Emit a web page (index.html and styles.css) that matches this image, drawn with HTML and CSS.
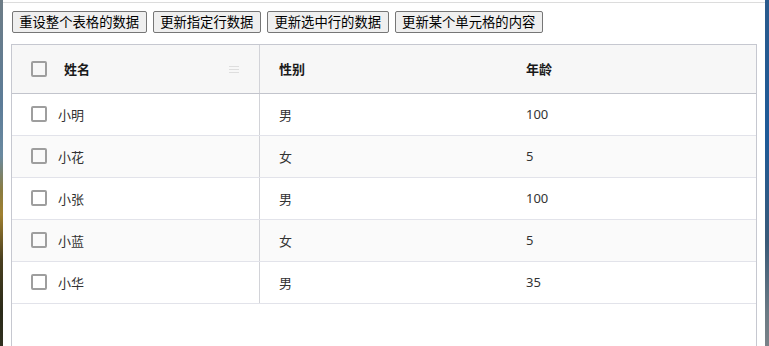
FILE: index.html
```html
<!DOCTYPE html>
<html lang="zh-CN">
<head>
<meta charset="utf-8">
<title>表格</title>
<link rel="stylesheet" href="styles.css">
</head>
<body>
<div class="desk desk-left"></div>
<div class="window">
  <div class="topline"></div>
  <div class="toolbar">
    <button class="btn">重设整个表格的数据</button>
    <button class="btn">更新指定行数据</button>
    <button class="btn">更新选中行的数据</button>
    <button class="btn">更新某个单元格的内容</button>
  </div>
  <div class="grid">
    <div class="row head">
      <div class="cell c1"><span class="cb"></span><span class="htext">姓名</span><span class="handle"><i></i><i></i><i></i></span></div>
      <div class="cell c2">性别</div>
      <div class="cell c3">年龄</div>
    </div>
    <div class="row"><div class="cell c1"><span class="cb"></span><span>小明</span></div><div class="cell c2">男</div><div class="cell c3">100</div></div>
    <div class="row alt"><div class="cell c1"><span class="cb"></span><span>小花</span></div><div class="cell c2">女</div><div class="cell c3">5</div></div>
    <div class="row"><div class="cell c1"><span class="cb"></span><span>小张</span></div><div class="cell c2">男</div><div class="cell c3">100</div></div>
    <div class="row alt"><div class="cell c1"><span class="cb"></span><span>小蓝</span></div><div class="cell c2">女</div><div class="cell c3">5</div></div>
    <div class="row"><div class="cell c1"><span class="cb"></span><span>小华</span></div><div class="cell c2">男</div><div class="cell c3">35</div></div>
  </div>
</div>
<div class="desk desk-right"></div>
</body>
</html>
```
FILE: styles.css
```css
html, body {
  margin: 0;
  height: 346px;
  overflow: hidden;
}
body {
  display: flex;
  background: #fff;
  font-family: "Noto Sans", "Noto Sans CJK SC", sans-serif;
}
.desk {
  flex: none;
  height: 346px;
}
.desk-left {
  width: 3px;
  background: linear-gradient(#6d7c86 0%, #5c7c98 30%, #6a8aa0 45%, #8a7c40 55%, #a08030 62%, #4a4020 75%, #2a2a18 90%, #303020 100%);
}
.desk-right {
  width: 4px;
  background: linear-gradient(#2a5a8c 0%, #1e5a98 40%, #3a5a78 70%, #6a7a84 90%, #7a8288 100%);
}
.window {
  flex: 1;
  min-width: 0;
  background: #fff;
  display: flex;
  flex-direction: column;
}
.topline {
  margin-top: 2px;
  height: 1px;
  background: #dcdcdc;
}
.toolbar {
  display: flex;
  gap: 6px;
  padding: 8px 0 0 8.7px;
  height: 22px;
}
.btn {
  height: 22px;
  padding: 0 6.5px;
  font-family: "Noto Sans CJK SC", sans-serif;
  font-size: 13.33px;
  line-height: 20px;
  color: #000;
  background: #efefef;
  border: 1px solid #767676;
  border-radius: 2px;
}
.grid {
  margin: 11px 0 0 8px;
  width: 744px;
  height: 320px;
  border: 1px solid #c6c8d0;
  border-bottom: none;
  font-size: 13px;
  color: #333;
}
.row {
  display: flex;
  height: 41px;
  border-bottom: 1px solid #e2e3ea;
  background: #fff;
}
.row.alt {
  background: #fafafa;
}
.row.head {
  height: 48px;
  background: #f7f7f7;
  border-bottom: 1px solid #c2c4cc;
  color: #1a1a1a;
  font-weight: bold;
}
.cell {
  display: flex;
  align-items: center;
  box-sizing: border-box;
}
.c1 {
  width: 248px;
  padding-left: 19px;
  border-right: 1px solid #d2d3d8;
  position: relative;
}
.c2 {
  width: 247px;
  padding-left: 19px;
}
.c3 {
  flex: 1;
  padding-left: 19px;
}
.cb {
  width: 12px;
  height: 12px;
  border: 2px solid #9e9e9e;
  border-radius: 2px;
  margin-right: 11px;
  flex: none;
}
.head .cb {
  margin-right: 17px;
}
.handle {
  position: absolute;
  left: 217px;
  top: 21px;
  width: 10px;
  display: flex;
  flex-direction: column;
  gap: 2px;
}
.handle i {
  display: block;
  height: 1px;
  background: #dedede;
}
```
